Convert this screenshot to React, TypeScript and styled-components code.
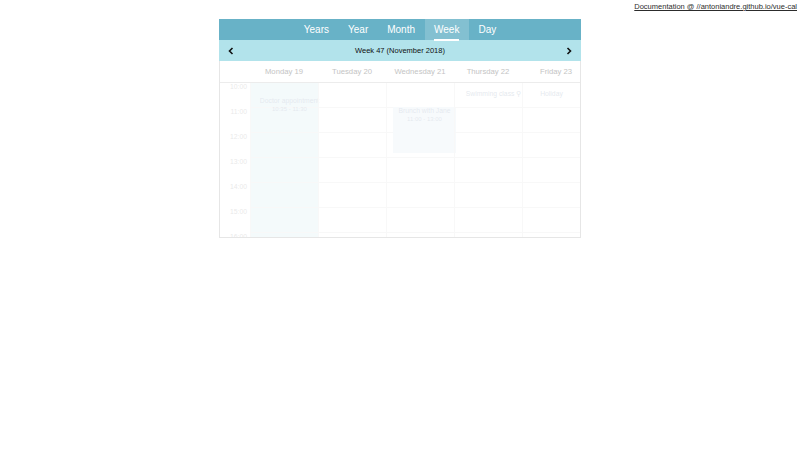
import React from "react";
import styled, { createGlobalStyle } from "styled-components";

const GlobalStyle = createGlobalStyle`
  html, body { margin: 0; padding: 0; background: #fff; }
  body { font-family: "Liberation Sans", Arial, sans-serif; }
`;

const Page = styled.div`
  width: 800px;
  display: flex;
  flex-direction: column;
  align-items: center;
`;

const TopBar = styled.div`
  align-self: stretch;
  height: 19px;
  display: flex;
  justify-content: flex-end;
  align-items: flex-start;
  padding: 2px 3px 0 0;
  box-sizing: border-box;
`;

const DocLink = styled.a`
  font-size: 7.5px;
  line-height: 10px;
  color: #2c2c2c;
  text-decoration: underline;
`;

const Calendar = styled.div`
  width: 362px;
  display: flex;
  flex-direction: column;
`;

const TitleBar = styled.div`
  height: 21px;
  background: #68b2c7;
  display: flex;
  justify-content: center;
  align-items: stretch;
`;

const Tab = styled.div<{ $active?: boolean }>`
  position: relative;
  padding: 0 9.5px;
  display: flex;
  align-items: center;
  color: #fff;
  font-size: 10px;
  background: ${(p) => (p.$active ? "rgba(255,255,255,0.18)" : "transparent")};
`;

const TabLabel = styled.span<{ $active?: boolean }>`
  position: relative;
  padding-bottom: 1px;
  &::after {
    content: "";
    display: ${(p) => (p.$active ? "block" : "none")};
    position: absolute;
    left: 0;
    right: 0;
    bottom: -5px;
    height: 1.5px;
    background: #fff;
  }
`;

const NavBar = styled.div`
  height: 21px;
  background: #b2e3eb;
  display: flex;
  align-items: center;
  justify-content: space-between;
  padding: 0 9px;
  box-sizing: border-box;
`;

const NavTitle = styled.div`
  font-size: 7.5px;
  color: #111;
`;

const Arrow = styled.svg`
  width: 6px;
  height: 8px;
  display: block;
`;

const Frame = styled.div`
  border: 1px solid #e6e6e6;
  border-top: none;
  overflow: hidden;
`;

const Grid = styled.div`
  display: grid;
  grid-template-columns: 30px repeat(5, 68px);
`;

const Heading = styled(Grid)`
  height: 21px;
  border-bottom: 1px solid #ececec;
  box-sizing: content-box;
`;

const DayLabel = styled.div`
  display: flex;
  align-items: center;
  justify-content: center;
  font-size: 7.7px;
  color: #c4c4c4;
  white-space: nowrap;
`;

const Body = styled.div`
  height: 154px;
  overflow: hidden;
  opacity: 0.13;
`;

const BodyGrid = styled(Grid)`
  align-items: start;
`;

const TimeCol = styled.div`
  display: flex;
  flex-direction: column;
`;

const TimeCell = styled.div`
  height: 25px;
  font-size: 6.8px;
  line-height: 8px;
  color: #555;
  text-align: right;
  padding-right: 3px;
  box-sizing: border-box;
`;

const DayCol = styled.div<{ $tint?: boolean }>`
  position: relative;
  display: flex;
  flex-direction: column;
  border-left: 1px solid #cfcfcf;
  background: ${(p) => (p.$tint ? "#b2dbe7" : "transparent")};
`;

const HourCell = styled.div`
  height: 25px;
  border-bottom: 1px solid #cccccc;
  box-sizing: border-box;
`;

const Event = styled.div<{ $bg?: string }>`
  position: absolute;
  left: 6px;
  right: -4px;
  display: flex;
  flex-direction: column;
  align-items: center;
  font-size: 6.8px;
  line-height: 8px;
  color: #2f5480;
  white-space: nowrap;
  background: ${(p) => p.$bg || "transparent"};
`;

const EventTime = styled.span`
  font-size: 6px;
`;

const hours = ["10:00", "11:00", "12:00", "13:00", "14:00", "15:00", "16:00"];
const days = ["Monday 19", "Tuesday 20", "Wednesday 21", "Thursday 22", "Friday 23"];
const tabs = ["Years", "Year", "Month", "Week", "Day"];

const Chevron = ({ dir }: { dir: "left" | "right" }) => (
  <Arrow viewBox="0 0 6 8">
    <path
      d={dir === "left" ? "M4.5 1 L1.5 4 L4.5 7" : "M1.5 1 L4.5 4 L1.5 7"}
      fill="none"
      stroke="#111"
      strokeWidth="1.6"
    />
  </Arrow>
);

export default function App() {
  return (
    <Page>
      <GlobalStyle />
      <TopBar>
        <DocLink href="#">Documentation @ //antoniandre.github.io/vue-cal</DocLink>
      </TopBar>
      <Calendar>
        <TitleBar>
          {tabs.map((t) => (
            <Tab key={t} $active={t === "Week"}>
              <TabLabel $active={t === "Week"}>{t}</TabLabel>
            </Tab>
          ))}
        </TitleBar>
        <NavBar>
          <Chevron dir="left" />
          <NavTitle>Week 47 (November 2018)</NavTitle>
          <Chevron dir="right" />
        </NavBar>
        <Frame>
          <Heading>
            <div />
            {days.map((d) => (
              <DayLabel key={d}>{d}</DayLabel>
            ))}
          </Heading>
          <Body>
            <BodyGrid>
              <TimeCol>
                {hours.map((h) => (
                  <TimeCell key={h}>{h}</TimeCell>
                ))}
              </TimeCol>
              {days.map((d, i) => (
                <DayCol key={d} $tint={i === 0}>
                  {hours.map((h) => (
                    <HourCell key={h} />
                  ))}
                  {i === 0 && (
                    <Event style={{ top: 14 }}>
                      <span>Doctor appointment</span>
                      <EventTime>10:35 - 11:30</EventTime>
                    </Event>
                  )}
                  {i === 2 && (
                    <Event $bg="#c9dcef" style={{ top: 24, height: 46, left: 6, right: -2 }}>
                      <span>Brunch with Jane</span>
                      <EventTime>11:00 - 13:00</EventTime>
                    </Event>
                  )}
                  {i === 3 && (
                    <Event style={{ top: 7, left: 12, right: 2 }}>
                      <span>Swimming class ⚲</span>
                    </Event>
                  )}
                  {i === 4 && (
                    <Event style={{ top: 7, left: 10, right: 20 }}>
                      <span>Holiday</span>
                    </Event>
                  )}
                </DayCol>
              ))}
            </BodyGrid>
          </Body>
        </Frame>
      </Calendar>
    </Page>
  );
}
